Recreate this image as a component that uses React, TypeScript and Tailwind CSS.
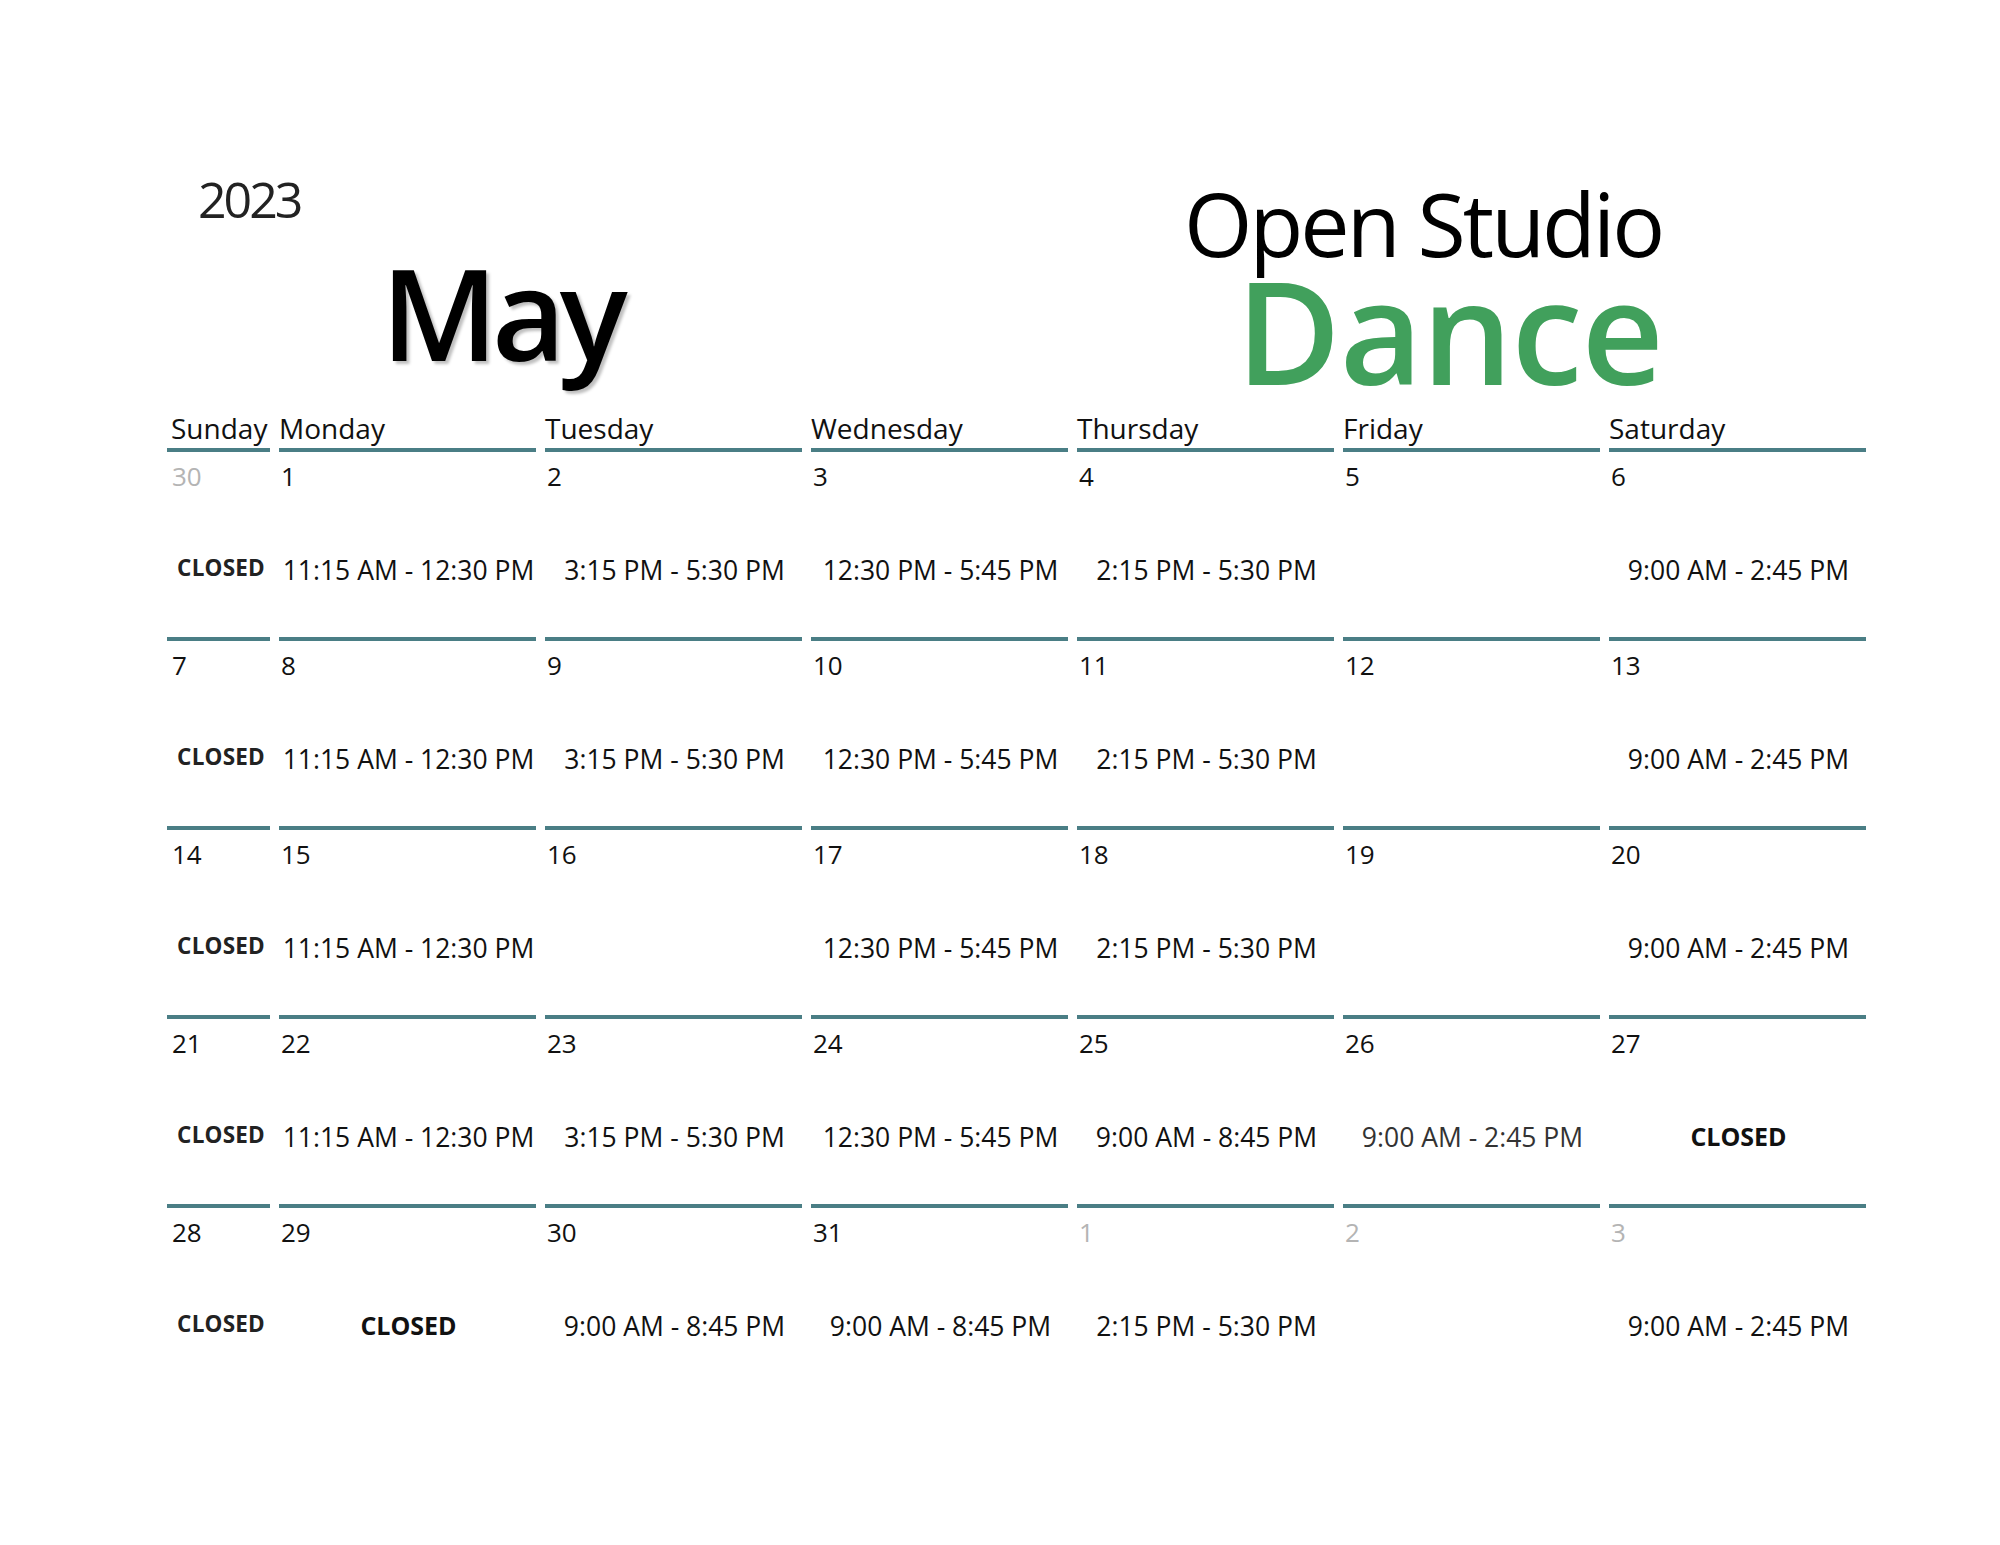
const FONT = "font-['Open_Sans','Noto_Sans',sans-serif]";

type Cell = {
  day: number;
  muted?: boolean;
  text?: string;
  kind?: 'time' | 'light' | 'closed' | 'closedSmall';
};

const weeks: Cell[][] = [
  [
    { day: 30, muted: true, text: 'CLOSED', kind: 'closedSmall' },
    { day: 1, text: '11:15 AM - 12:30 PM' },
    { day: 2, text: '3:15 PM - 5:30 PM' },
    { day: 3, text: '12:30 PM - 5:45 PM' },
    { day: 4, text: '2:15 PM - 5:30 PM' },
    { day: 5 },
    { day: 6, text: '9:00 AM - 2:45 PM' },
  ],
  [
    { day: 7, text: 'CLOSED', kind: 'closedSmall' },
    { day: 8, text: '11:15 AM - 12:30 PM' },
    { day: 9, text: '3:15 PM - 5:30 PM' },
    { day: 10, text: '12:30 PM - 5:45 PM' },
    { day: 11, text: '2:15 PM - 5:30 PM' },
    { day: 12 },
    { day: 13, text: '9:00 AM - 2:45 PM' },
  ],
  [
    { day: 14, text: 'CLOSED', kind: 'closedSmall' },
    { day: 15, text: '11:15 AM - 12:30 PM' },
    { day: 16 },
    { day: 17, text: '12:30 PM - 5:45 PM' },
    { day: 18, text: '2:15 PM - 5:30 PM' },
    { day: 19 },
    { day: 20, text: '9:00 AM - 2:45 PM' },
  ],
  [
    { day: 21, text: 'CLOSED', kind: 'closedSmall' },
    { day: 22, text: '11:15 AM - 12:30 PM' },
    { day: 23, text: '3:15 PM - 5:30 PM' },
    { day: 24, text: '12:30 PM - 5:45 PM' },
    { day: 25, text: '9:00 AM - 8:45 PM' },
    { day: 26, text: '9:00 AM - 2:45 PM', kind: 'light' },
    { day: 27, text: 'CLOSED', kind: 'closed' },
  ],
  [
    { day: 28, text: 'CLOSED', kind: 'closedSmall' },
    { day: 29, text: 'CLOSED', kind: 'closed' },
    { day: 30, text: '9:00 AM - 8:45 PM' },
    { day: 31, text: '9:00 AM - 8:45 PM' },
    { day: 1, muted: true, text: '2:15 PM - 5:30 PM' },
    { day: 2, muted: true },
    { day: 3, muted: true, text: '9:00 AM - 2:45 PM' },
  ],
];

const dayNames = ['Sunday', 'Monday', 'Tuesday', 'Wednesday', 'Thursday', 'Friday', 'Saturday'];

const textStyles = {
  time: 'text-[26.5px] font-medium text-[#111]',
  light: 'text-[26.5px] font-normal text-[#333]',
  closed: 'text-[25px] font-bold text-[#111]',
  closedSmall: 'text-[22.5px] font-bold tracking-[0.2px] text-[#222]',
};

function DayCell({ cell, index, last }: { cell: Cell; index: number; last: boolean }) {
  const kind = cell.kind ?? 'time';
  return (
    <div
      className={`h-[189px] flex flex-col ${last ? '' : 'border-b-4 border-[#4a7e85]'} ${index === 0 ? 'pl-[5px]' : 'pl-[2px]'}`}
    >
      <div className={`mt-[11px] text-[26px] leading-none ${cell.muted ? 'text-[#b4b4b4]' : 'text-[#111]'}`}>
        {cell.day}
      </div>
      {cell.text && (
        <div className={`mt-[68px] leading-none text-center whitespace-nowrap ${textStyles[kind]}`}>
          {cell.text}
        </div>
      )}
    </div>
  );
}

export default function App() {
  return (
    <div className={`w-[2000px] h-[1545px] bg-white pl-[167px] ${FONT}`}>
      {/* タイトル */}
      <div className="flex items-start">
        <div className="w-[1017px] pt-[174px] flex flex-col">
          <div className="ml-[31px] text-[50px] leading-none tracking-[-3px] text-[#222]">2023</div>
          <div className="ml-[214px] mt-[24px] text-[127px] leading-none font-semibold tracking-[-6px] text-black [text-shadow:3px_3px_3px_rgba(0,0,0,0.25)]">
            May
          </div>
        </div>
        <div className="pt-[188px] flex flex-col">
          <div className="text-[88px] leading-[70px] tracking-[-3px] text-black">Open Studio</div>
          <div className="ml-[52px] mt-[17px] text-[143px] leading-[110px] font-semibold tracking-[-1px] text-[#41a05c]">
            Dance
          </div>
        </div>
      </div>

      {/* 曜日 */}
      <div className="mt-[29px] grid grid-cols-[103px_repeat(6,257px)] gap-x-[9px]">
        {dayNames.map((d, i) => (
          <div
            key={d}
            className={`pb-[6px] border-b-4 border-[#4a7e85] text-[28px] leading-none text-[#111] ${i === 0 ? 'pl-[4px]' : ''}`}
          >
            {d}
          </div>
        ))}
      </div>

      {/* カレンダー */}
      {weeks.map((week, w) => (
        <div key={w} className="grid grid-cols-[103px_repeat(6,257px)] gap-x-[9px]">
          {week.map((cell, i) => (
            <DayCell key={i} cell={cell} index={i} last={w === weeks.length - 1} />
          ))}
        </div>
      ))}
    </div>
  );
}
